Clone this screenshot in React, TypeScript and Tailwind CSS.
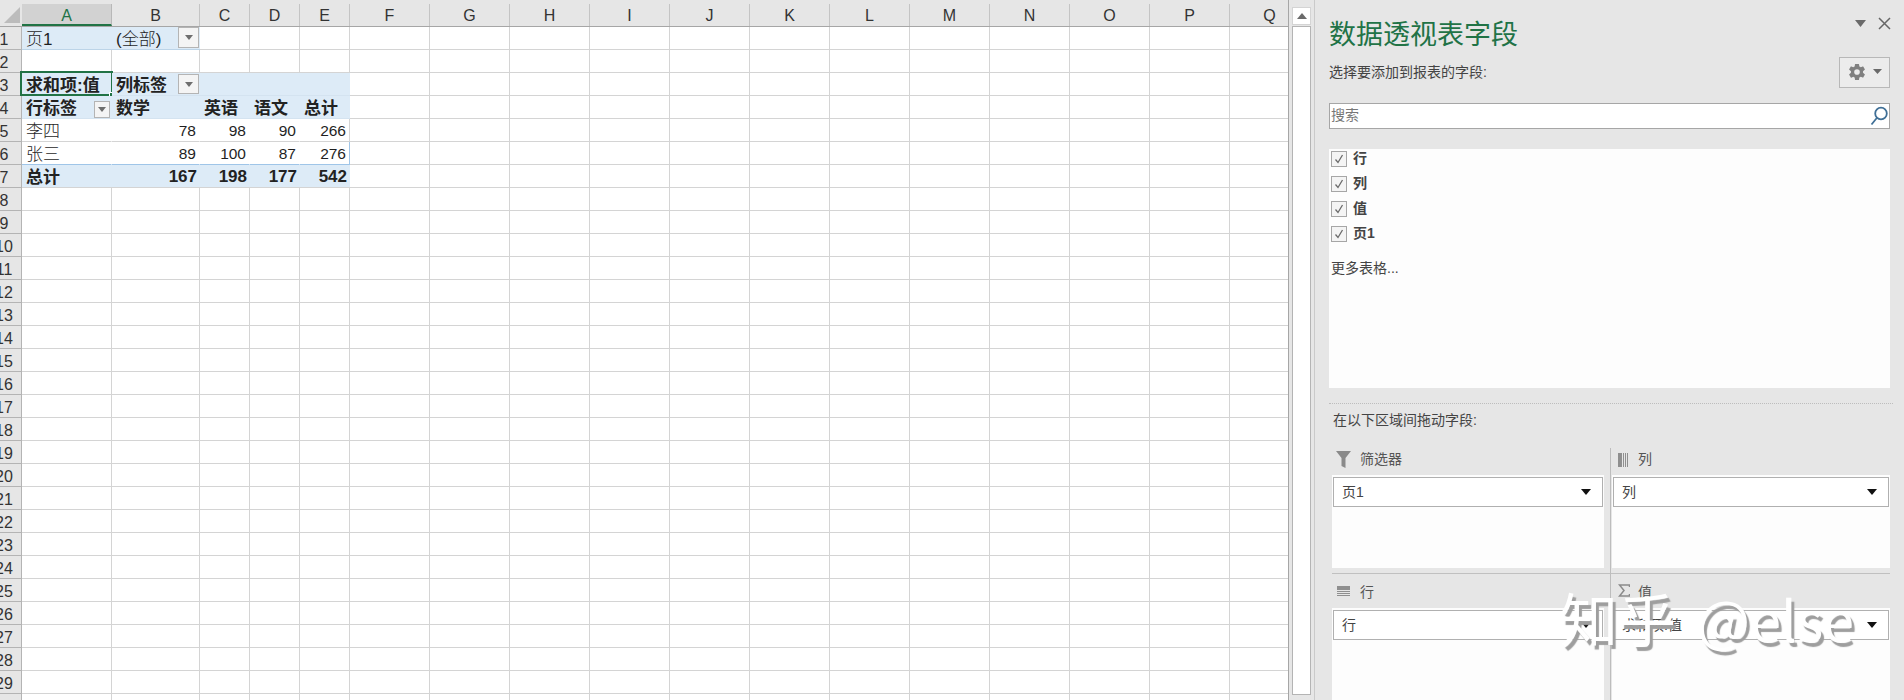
import React from 'react';
import { IoSettingsSharp } from 'react-icons/io5';

const columns = ['A', 'B', 'C', 'D', 'E', 'F', 'G', 'H', 'I', 'J', 'K', 'L', 'M', 'N', 'O', 'P', 'Q'];
const rowNumbers = Array.from({ length: 30 }, (_, i) => i + 1);
const gridCols = 'grid grid-cols-[22px_90px_88px_50px_50px_50px_repeat(11,80px)_80px]';

const fields = ['行', '列', '值', '页1'];

// 透视表内容, 其余单元格为空
type Cell = { text?: string; right?: boolean; bold?: boolean; filter?: boolean };
const pivot: Record<string, Cell> = {
  '1-A': { text: '页1' },
  '1-B': { text: '(全部)', filter: true },
  '3-A': { text: '求和项:值', bold: true },
  '3-B': { text: '列标签', bold: true, filter: true },
  '4-A': { text: '行标签', bold: true, filter: true },
  '4-B': { text: '数学', bold: true },
  '4-C': { text: '英语', bold: true },
  '4-D': { text: '语文', bold: true },
  '4-E': { text: '总计', bold: true },
  '5-A': { text: '李四' },
  '5-B': { text: '78', right: true },
  '5-C': { text: '98', right: true },
  '5-D': { text: '90', right: true },
  '5-E': { text: '266', right: true },
  '6-A': { text: '张三' },
  '6-B': { text: '89', right: true },
  '6-C': { text: '100', right: true },
  '6-D': { text: '87', right: true },
  '6-E': { text: '276', right: true },
  '7-A': { text: '总计', bold: true },
  '7-B': { text: '167', bold: true, right: true },
  '7-C': { text: '198', bold: true, right: true },
  '7-D': { text: '177', bold: true, right: true },
  '7-E': { text: '542', bold: true, right: true },
};

function isFilled(row: number, col: string) {
  if (row === 1) return col === 'A' || col === 'B';
  if (row === 3 || row === 4 || row === 7) return 'ABCDE'.includes(col);
  return false;
}

function FilterButton({ row }: { row: number }) {
  let place = 'right-[1px] top-0 w-[21px] h-[21px]';
  if (row === 3) place = 'right-[1px] top-[1px] w-[21px] h-[20px]';
  if (row === 4) place = 'right-[2px] top-[5px] w-[16px] h-[17px]';
  return (
    <div className={`absolute bg-[#f4f4f4] border border-[#b4b4b4] flex items-center justify-center ${place}`}>
      <svg width="8" height="5" viewBox="0 0 8 5">
        <path d="M0 0h8L4 5z" fill="#6e6e6e" />
      </svg>
    </div>
  );
}

function SheetCell({ row, col }: { row: number; col: string }) {
  const cell = pivot[`${row}-${col}`];
  const filled = isFilled(row, col);
  const selected = row === 3 && col === 'A';
  const pivotBody = 'ABCDE'.includes(col);
  const numeric = !!cell?.text && /^\d+$/.test(cell.text);
  let line = 'border-b border-r border-[#d4d4d4]';
  if (filled) line = 'border-b border-[#d4e3f0]';
  if (row === 1 && filled) line = 'border-b border-[#bcd4e8]';
  if (row === 6 && pivotBody) line = 'border-b border-[#9fc5e8]';
  if (row === 7 && filled) line = 'border-b border-[#d4d4d4]';
  if ((row === 5 || row === 6) && pivotBody) line += col === 'E' ? ' border-r' : ' border-r border-r-transparent';

  let size = 'text-[17px] leading-[25px]';
  if (numeric) size = cell?.bold ? 'text-[17px] leading-[24px]' : 'text-[15.5px] leading-[24px]';

  return (
    <div
      className={`relative h-[23px] min-w-0 ${line} ${filled ? 'bg-[#ddebf7]' : 'bg-white'} ${cell?.right ? 'text-right pr-[3px]' : 'pl-[4px]'} ${cell?.bold ? 'font-bold text-[#222]' : 'font-light text-[#1f1f1f]'} ${size} whitespace-nowrap font-['Liberation_Sans','Noto_Sans_CJK_SC',sans-serif]`}
    >
      {cell?.text}
      {cell?.filter && <FilterButton row={row} />}
      {selected && (
        <div className="absolute -left-[2px] -top-[2px] -right-[1px] -bottom-[1px] border-2 border-[#217346]">
          <div className="absolute -right-[3px] -bottom-[3px] w-[5px] h-[5px] bg-[#217346] border border-white" />
        </div>
      )}
    </div>
  );
}

function Sheet() {
  return (
    <div className="w-[1288px] h-[700px] overflow-hidden shrink-0 border-r border-[#a6a6a6] bg-white box-content">
      <div className={`${gridCols} h-[22px] pt-[4px] bg-[#e6e6e6] border-b border-[#a6a6a6] box-content font-['Liberation_Sans',sans-serif] text-[16px] leading-[24px] text-[#333]`}>
        <div className="relative h-[22px]">
          <svg className="absolute left-[4px] top-[3px]" width="16" height="16" viewBox="0 0 16 16">
            <path d="M16 0v16H0z" fill="#bcbcbc" />
          </svg>
        </div>
        {columns.map(c => (
          <div
            key={c}
            className={c === 'A'
              ? 'h-[22px] text-center bg-[#d2d2d2] border-b-2 border-[#217346] text-[#217346] border-r border-r-[#b8b8b8]'
              : 'h-[22px] text-center border-r border-[#c4c4c4]'}
          >
            {c}
          </div>
        ))}
      </div>
      {rowNumbers.map(row => (
        <div key={row} className={gridCols}>
          <div className="h-[23px] bg-[#e6e6e6] border-b border-r border-[#b4b4b4] overflow-hidden text-[#333] text-[16px] leading-[26px] font-['Liberation_Sans',sans-serif]">
            <div className="w-[8px] flex justify-center whitespace-nowrap">{row}</div>
          </div>
          {columns.map(col => (
            <SheetCell key={col} row={row} col={col} />
          ))}
        </div>
      ))}
    </div>
  );
}

function ScrollBar() {
  return (
    <div className="w-[25px] h-[700px] shrink-0 bg-[#e6e6e6] pt-[7px] pl-[3px]">
      <div className="w-[19px] h-[18px] bg-white border border-[#d4d4d4] flex items-center justify-center">
        <svg width="10" height="6" viewBox="0 0 10 6">
          <path d="M0 6h10L5 0z" fill="#6a6a6a" />
        </svg>
      </div>
      <div className="w-[19px] h-[669px] mt-[1px] bg-white border border-[#b4b4b4]" />
    </div>
  );
}

function FieldRow({ name }: { name: string }) {
  return (
    <div className="h-[25px] pb-[6px] flex items-center pl-[2px]">
      <div className="w-[16px] h-[16px] bg-[#f4f4f4] border border-[#a6a6a6] flex items-center justify-center">
        <svg width="12" height="12" viewBox="0 0 12 12" fill="none" stroke="#6a6a6a" strokeWidth="1.3">
          <path d="M2.5 6.5 5 9.5 9.5 2" />
        </svg>
      </div>
      <span className="ml-[6px] text-[14px] font-bold text-[#444]">{name}</span>
    </div>
  );
}

function AreaSelect({ label }: { label: string }) {
  return (
    <div className="h-[30px] mx-[1px] bg-white border border-[#b0b0b0] flex items-center justify-between pl-[8px] pr-[11px] text-[14px] text-[#444]">
      <span>{label}</span>
      <svg width="10" height="6" viewBox="0 0 10 6">
        <path d="M0 0h10L5 6z" fill="#111" />
      </svg>
    </div>
  );
}

function FilterIcon() {
  return (
    <svg width="15" height="17" viewBox="0 0 15 17">
      <path d="M0 0h15L9.5 7v10l-4-2V7z" fill="#8a8a8a" />
    </svg>
  );
}

function ColumnsIcon() {
  return (
    <svg width="12" height="14" viewBox="0 0 12 14" fill="#8f8f8f">
      <rect x="0" width="4" height="14" />
      <rect x="5" width="1" height="14" />
      <rect x="7" width="1" height="14" />
      <rect x="9" width="1" height="14" />
    </svg>
  );
}

function RowsIcon() {
  return (
    <svg width="13" height="12" viewBox="0 0 13 12" fill="#8f8f8f">
      <rect y="0" width="13" height="4" />
      <rect y="5" width="13" height="1" />
      <rect y="7" width="13" height="1" />
      <rect y="9" width="13" height="1" />
    </svg>
  );
}

function SigmaIcon() {
  return (
    <svg className="-mt-[3px]" width="12" height="13" viewBox="0 0 12 13" fill="none" stroke="#8a8a8a" strokeWidth="1.5">
      <path d="M11.5 3V1H1.5l4.5 5.5L1.5 12h10v-2" />
    </svg>
  );
}

type AreaProps = {
  icon: React.ReactNode;
  title: string;
  label: string;
  labelHeight: string;
  iconWidth: string;
};

function Area({ icon, title, label, labelHeight, iconWidth }: AreaProps) {
  return (
    <div className="min-w-0">
      <div className={`${labelHeight} flex items-center text-[14px] text-[#555]`}>
        <div className={`${iconWidth} flex justify-center`}>{icon}</div>
        <span className="ml-[7px]">{title}</span>
      </div>
      <div className="h-[93px] bg-[#fdfdfd] pt-[2px]">
        <AreaSelect label={label} />
      </div>
    </div>
  );
}

function PivotPanel() {
  return (
    <div className="relative flex-1 h-[700px] overflow-hidden bg-[#e6e6e6] border-l border-[#cacaca] pl-[14px] pr-[14px] font-['Liberation_Sans','Noto_Sans_CJK_SC',sans-serif]">
      <div className="h-[57px] pt-[17px] flex justify-between">
        <div className="text-[27px] leading-[36px] text-[#217346]">数据透视表字段</div>
        <div className="flex items-start -mr-[1px] gap-[12px]">
          <svg className="mt-[3px]" width="11" height="7" viewBox="0 0 11 7">
            <path d="M0 0h11L5.5 7z" fill="#6a6a6a" />
          </svg>
          <svg width="13" height="13" viewBox="0 0 13 13" fill="none" stroke="#666" strokeWidth="1.5">
            <path d="M1 1l11 11M12 1 1 12" />
          </svg>
        </div>
      </div>
      <div className="h-[31px] flex items-center justify-between">
        <span className="text-[14px] text-[#444]">选择要添加到报表的字段:</span>
        <div className="w-[51px] h-[31px] bg-[#ececec] border border-[#b8b8b8] flex items-center justify-center gap-[7px] pb-[2px]">
          <IoSettingsSharp size={18} color="#808080" />
          <svg width="9" height="5" viewBox="0 0 9 5">
            <path d="M0 0h9L4.5 5z" fill="#6a6a6a" />
          </svg>
        </div>
      </div>
      <div className="mt-[15px] h-[26px] bg-white border border-[#a6a6a6] flex items-center justify-between pb-[2px] pl-[1px] pr-[1px] text-[14px] text-[#777]">
        <span>搜索</span>
        <svg className="mt-[2px]" width="18" height="20" viewBox="0 0 18 20" fill="none" stroke="#3f6f96" strokeWidth="1.8">
          <circle cx="11" cy="7.5" r="5.8" />
          <path d="M6.8 12 1.5 18.5" />
        </svg>
      </div>
      <div className="mt-[20px] h-[239px] bg-[#fdfdfd]">
        {fields.map(f => (
          <FieldRow key={f} name={f} />
        ))}
        <div className="mt-[9px] pl-[2px] text-[14px] leading-[20px] text-[#444]">更多表格...</div>
      </div>
      <div className="mt-[15px] border-t border-dotted border-[#bdbdbd] -mr-[3px]" />
      <div className="h-[30px] mt-[1px] pl-[4px] flex items-center text-[14px] text-[#444]">在以下区域间拖动字段:</div>
      <div className="relative mt-[13px] ml-[3px] grid grid-cols-[272px_278px] gap-x-[8px]">
        <Area icon={<FilterIcon />} iconWidth="w-[20px] ml-[1px]" title="筛选器" label="页1" labelHeight="h-[27px] pb-[4px]" />
        <Area icon={<ColumnsIcon />} iconWidth="w-[14px] ml-[5px]" title="列" label="列" labelHeight="h-[27px] pb-[4px]" />
        <div className="col-span-2 h-[6px] border-b border-[#c0c0c0]" />
        <Area icon={<RowsIcon />} iconWidth="w-[20px] ml-[1px]" title="行" label="行" labelHeight="h-[34px] pt-[2px]" />
        <Area icon={<SigmaIcon />} iconWidth="w-[14px] ml-[5px]" title="值" label="求和项:值" labelHeight="h-[34px] pt-[2px]" />
        <div className="absolute left-[278px] top-0 bottom-0 w-px bg-[#bdbdbd]" />
      </div>
      <div className="absolute left-[245px] top-[582px] text-[58px] leading-[70px] text-white whitespace-nowrap [word-spacing:8px] [text-shadow:3px_4px_1px_#9e9e9e] font-['Noto_Sans_CJK_SC',sans-serif]">
        知乎 <span className="text-[56px]">@else</span>
      </div>
    </div>
  );
}

export default function App() {
  return (
    <div className="w-[1904px] h-[700px] flex overflow-hidden bg-[#e6e6e6]">
      <Sheet />
      <ScrollBar />
      <PivotPanel />
    </div>
  );
}
